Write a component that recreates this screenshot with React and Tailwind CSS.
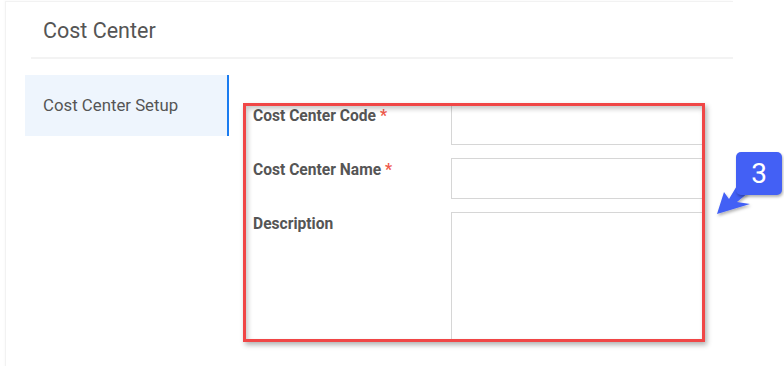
import React from 'react';

function Field({ label, required, tall }) {
    return (
        <div className="flex">
            <div className="w-[198px] pt-[2px] text-[15.6px] font-bold text-[#555] leading-[20px]">
                {label}
                {required && <span className="text-[#f0594b] ml-[4px]">*</span>}
            </div>
            <div className={`w-[252px] border border-[#d6d6d6] bg-white ${tall ? 'h-[128px]' : 'h-[41px]'}`} />
        </div>
    );
}

export default function App() {
    return (
        <div className="relative w-[784px] h-[366px] overflow-hidden bg-white" style={{ fontFamily: 'Roboto, "Liberation Sans", sans-serif' }}>
            {/* Card */}
            <div className="ml-[5px] mt-[1px] w-[728px] h-[400px] border-l border-t border-[#f2f2f2] shadow-[-1px_-1px_2px_rgba(0,0,0,0.02)]">
                <div className="ml-[25px] h-[57px] border-b-2 border-[#f3f3f3] pl-[12px] flex items-center">
                    <h1 className="text-[21.5px] text-[#555] leading-none pt-[2px]">Cost Center</h1>
                </div>

                <div className="flex mt-[16px]">
                    {/* Side nav */}
                    <div className="ml-[19px] w-[204px] h-[61px] bg-[#eef5fd] border-r-2 border-[#1a7cf0] pl-[18px] flex items-center">
                        <span className="text-[16.8px] text-[#555] pt-[1px]">Cost Center Setup</span>
                    </div>

                    {/* Form */}
                    <div className="ml-[24px] mt-[29px] flex flex-col gap-[13px]">
                        <Field label="Cost Center Code" required />
                        <Field label="Cost Center Name" required />
                        <Field label="Description" tall />
                    </div>
                </div>
            </div>

            {/* Annotation box */}
            <div className="absolute left-[243px] top-[103px] w-[462px] h-[239px] border-[3px] border-[#f04646] shadow-[2px_3px_5px_rgba(0,0,0,0.3),inset_2px_3px_5px_rgba(0,0,0,0.22)] pointer-events-none" />

            {/* Step badge */}
            <svg className="absolute left-[712px] top-[178px]" width="46" height="42" viewBox="0 0 46 42">
                <defs>
                    <filter id="sh" x="-20%" y="-20%" width="150%" height="150%">
                        <feDropShadow dx="1" dy="2" stdDeviation="1.5" floodColor="#000" floodOpacity="0.3" />
                    </filter>
                </defs>
                <polygon points="5,36 12,14 17,21 26,6 36,15 25,24 38,26" fill="#4360f5" filter="url(#sh)" />
            </svg>
            <div className="absolute left-[736px] top-[152px] w-[46px] h-[43px] rounded-[5px] bg-[#4360f5] shadow-[1px_2px_3px_rgba(0,0,0,0.3)] flex items-center justify-center text-white text-[28px] leading-none">
                3
            </div>
        </div>
    );
}
